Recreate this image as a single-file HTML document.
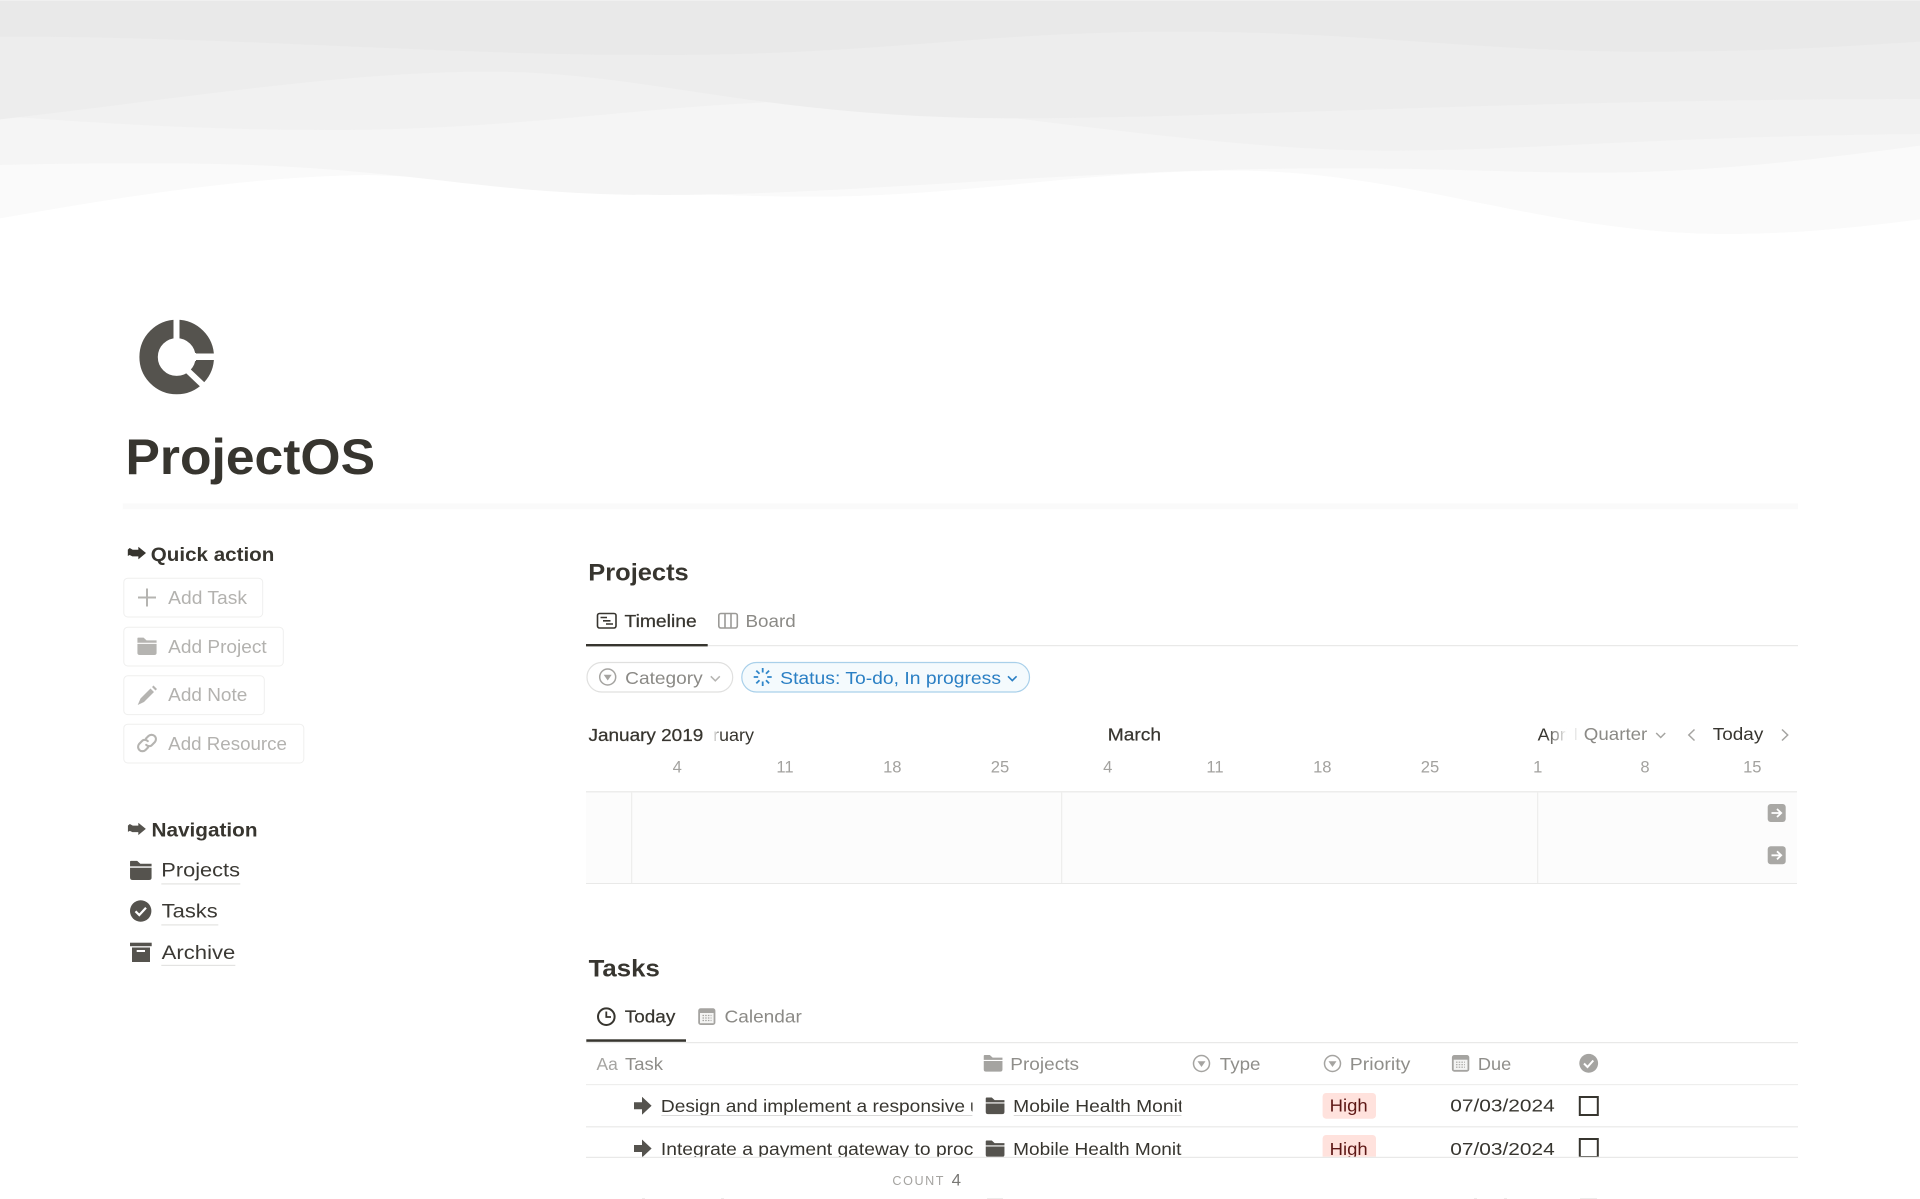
<!DOCTYPE html>
<html lang="en"><head><meta charset="utf-8"><title>ProjectOS</title>
<style>
html,body{margin:0;padding:0;background:#fff;width:1920px;height:1199px;overflow:hidden}
svg{display:block}
text{font-family:"Liberation Sans",Arial,sans-serif;fill:#37352f;white-space:pre}
.h{font-weight:700;font-size:19.8px}
.btn{font-size:18.3px;fill:#b3b2af}
.nav{font-size:19.8px;fill:#3b3934}
.sec{font-weight:700;font-size:24.3px}
.tab{font-size:17.8px;stroke:#37352f;stroke-width:.25px}
.tabg{font-size:17.8px;fill:#8b8a86}
.mon{font-size:17.8px;stroke:#37352f;stroke-width:.25px}
.day{font-size:16.6px;fill:#a3a29f}
.th{font-size:17.6px;fill:#8f8e8a}
.td{font-size:17.8px}
.ic{fill:#55534e}
.icg{fill:#b5b4b1}
.ich{fill:#a5a4a1}
</style></head><body>
<svg xmlns="http://www.w3.org/2000/svg" width="1920" height="1199" viewBox="0 0 1920 1199">
<defs>
<linearGradient id="f1" gradientUnits="userSpaceOnUse" x1="713" x2="722" y1="0" y2="0"><stop offset="0" stop-color="#fff"/><stop offset="1" stop-color="#37352f"/></linearGradient>
<linearGradient id="f2" gradientUnits="userSpaceOnUse" x1="1546" x2="1567" y1="0" y2="0"><stop offset="0" stop-color="#37352f"/><stop offset="1" stop-color="#fff"/></linearGradient>
<clipPath id="cFeb"><rect x="708" y="720" width="60" height="30"/></clipPath>
<clipPath id="cApr"><rect x="1530" y="720" width="38" height="30"/></clipPath>
<clipPath id="cT"><rect x="586" y="1090" width="386.500" height="66.700"/></clipPath>
<clipPath id="cP"><rect x="1010" y="1090" width="171.500" height="66.700"/></clipPath>
<clipPath id="cRow"><rect x="586" y="1086" width="1212" height="70.700"/></clipPath>
<symbol id="turn" viewBox="0 0 55 38"><path d="M0 9L6 4L15 9H32V0L55 19L32 38V29H14L6 25L0 28Z"/></symbol>
<symbol id="folder" viewBox="0 0 65 58"><path d="M0 3Q0 0 3 0H21L31 9H65V17H0Z"/><path d="M0 21H65V50Q65 58 57 58H8Q0 58 0 50Z"/></symbol>
<symbol id="ra" viewBox="0 0 17.600 18"><path d="M0 5.500H8V0L17.600 9L8 18V12.500H0Z"/></symbol>
</defs>

<!-- cover -->
<svg x="0" y="0" width="1920" height="280" viewBox="0 0 1568 840" preserveAspectRatio="none">
<path fill="#fafafa" d="M0 655C100 590 200 530 300 525C430 540 540 590 660 590C790 590 880 512 1010 512C1150 512 1260 702 1410 702C1470 702 1520 680 1568 658L1568 0L0 0Z"/>
<path fill="#f5f5f5" d="M0 495C50 490 100 490 130 490C330 490 380 585 540 585C700 585 880 505 1090 505C1190 505 1230 518 1300 518C1390 518 1470 485 1568 437L1568 0L0 0Z"/>
<path fill="#f1f1f1" d="M0 348C100 375 180 390 270 390C420 390 520 320 640 305C700 295 780 330 830 355C950 410 1050 452 1130 452C1250 452 1350 410 1568 402L1568 0L0 0Z"/>
<path fill="#ededed" d="M0 358C150 295 280 215 400 215C530 215 620 355 830 355C1000 355 1250 297 1568 297L1568 0L0 0Z"/>
<path fill="#e9e9e9" d="M0 110C200 110 350 165 540 165C720 165 800 95 960 95C1120 95 1200 155 1350 155C1450 155 1510 138 1568 125L1568 0L0 0Z"/>
</svg>
<rect x="0" y="0" width="1920" height="1" fill="#f0f0f0"/>

<!-- page icon -->
<circle cx="176.700" cy="357" r="28.100" fill="none" stroke="#55534e" stroke-width="18.400"/>
<rect x="173.500" y="316" width="6" height="24" fill="#fff"/>
<rect x="192" y="353.500" width="26" height="6.500" fill="#fff"/>
<rect x="190" y="353" width="6" height="8" fill="#fff"/>
<path d="M186 369L206 388" stroke="#fff" stroke-width="6" fill="none"/>

<text x="125.500" y="474" font-size="49.800" font-weight="700" textLength="249.500" lengthAdjust="spacingAndGlyphs">ProjectOS</text>
<rect x="122.700" y="503.300" width="1675.300" height="6" fill="#fafafa"/>

<!-- quick action -->
<use href="#turn" x="127.700" y="546.700" width="18.300" height="12.700" fill="#37352f"/>
<text class="h" x="150.800" y="561" textLength="123.500" lengthAdjust="spacingAndGlyphs">Quick action</text>

<rect x="123.800" y="578.200" width="138.900" height="38.800" rx="4" fill="#fff" stroke="#efefee"/>
<rect x="123.800" y="627.200" width="159.500" height="38.800" rx="4" fill="#fff" stroke="#efefee"/>
<rect x="123.800" y="675.800" width="140.500" height="38.800" rx="4" fill="#fff" stroke="#efefee"/>
<rect x="123.800" y="724.200" width="180" height="38.800" rx="4" fill="#fff" stroke="#efefee"/>

<path d="M147 588.500V606.500M138 597.500H156" stroke="#b5b4b1" stroke-width="2" fill="none"/>
<use href="#folder" x="137.300" y="637.300" width="19.400" height="18" class="icg"/>
<path d="M137.700 705L140.500 698.500L150.500 688.500L154 692L144 702ZM152 687L153.500 685.500L157 689L155.500 690.500Z" class="icg"/>
<g fill="none" stroke="#b5b4b1" stroke-width="2.100" stroke-linecap="round">
<path d="M146 738.500L148.700 735.800A4.400 4.400 0 0 1 154.900 742L151.200 745.700A4.400 4.400 0 0 1 146.200 744.900"/>
<path d="M148 747.500L145.300 750.200A4.400 4.400 0 0 1 139.100 744L142.800 740.300A4.400 4.400 0 0 1 147.800 741.100"/>
</g>

<text class="btn" x="168.200" y="604" textLength="78.800" lengthAdjust="spacingAndGlyphs">Add Task</text>
<text class="btn" x="168.200" y="653" textLength="98.500" lengthAdjust="spacingAndGlyphs">Add Project</text>
<text class="btn" x="168.200" y="701" textLength="79.100" lengthAdjust="spacingAndGlyphs">Add Note</text>
<text class="btn" x="168.200" y="750" textLength="118.800" lengthAdjust="spacingAndGlyphs">Add Resource</text>

<!-- navigation -->
<use href="#turn" x="127.700" y="822.700" width="18.300" height="12.400" fill="#55534e"/>
<text class="h" x="151.500" y="836.700" textLength="106" lengthAdjust="spacingAndGlyphs">Navigation</text>

<use href="#folder" x="130" y="860.700" width="21.700" height="19.300" class="ic"/>
<circle cx="140.700" cy="911" r="10.700" class="ic"/>
<path d="M135.500 911.300L139.300 915L146 907.800" stroke="#fff" stroke-width="2.200" fill="none"/>
<rect x="130" y="942.700" width="21.700" height="3.500" class="ic"/>
<path d="M132 947.500H150V962H132ZM136.700 950V952H145V950Z" class="ic" fill-rule="evenodd"/>

<text class="nav" x="161.300" y="876.700" textLength="78.700" lengthAdjust="spacingAndGlyphs">Projects</text>
<rect x="161.300" y="883.300" width="79" height="1.200" fill="#e3e3e2"/>
<text class="nav" x="161.700" y="917.700" textLength="56" lengthAdjust="spacingAndGlyphs">Tasks</text>
<rect x="161.300" y="924.300" width="57" height="1.200" fill="#e3e3e2"/>
<text class="nav" x="161.700" y="959" textLength="73.600" lengthAdjust="spacingAndGlyphs">Archive</text>
<rect x="161.300" y="964.800" width="74" height="1.200" fill="#e3e3e2"/>

<!-- Projects section -->
<text class="sec" x="588.300" y="580.700" textLength="100.400" lengthAdjust="spacingAndGlyphs">Projects</text>

<g fill="none" stroke="#37352f" stroke-width="1.600">
<rect x="597.500" y="613.500" width="18.500" height="14.500" rx="2"/>
<path d="M600.500 617.500H607M603 620.800H610.500M606 624H613"/>
</g>
<text class="tab" x="624.500" y="627" textLength="72.200" lengthAdjust="spacingAndGlyphs">Timeline</text>
<g fill="none" stroke="#9b9a97" stroke-width="1.600">
<rect x="718.800" y="613.500" width="18.500" height="14.500" rx="2"/>
<path d="M725 613.500V628M731 613.500V628"/>
</g>
<text class="tabg" x="745.500" y="627" textLength="50.200" lengthAdjust="spacingAndGlyphs">Board</text>
<rect x="586" y="645" width="1212" height="1.200" fill="#e9e9e8"/>
<rect x="586" y="644" width="121.700" height="2.400" fill="#37352f"/>

<!-- filters -->
<rect x="587" y="662.500" width="145.700" height="29.500" rx="14.700" fill="#fff" stroke="#e0e0df" stroke-width="1.200"/>
<circle cx="607.700" cy="677" r="8" fill="none" stroke="#a5a4a1" stroke-width="1.500"/>
<path d="M603.700 674.800H611.700L607.700 680.500Z" fill="#a5a4a1"/>
<text class="tabg" x="625.200" y="683.800" textLength="77.500" lengthAdjust="spacingAndGlyphs">Category</text>
<path d="M710.800 676.300L715.300 680.800L719.800 676.300" fill="none" stroke="#b5b4b1" stroke-width="1.500"/>

<rect x="741.800" y="662.500" width="287.700" height="29.500" rx="14.700" fill="#f4fafd" stroke="#a9d0ea" stroke-width="1.200"/>
<g stroke="#2f86c9" stroke-width="1.800" fill="none">
<path d="M762.700 668V672.500M762.700 681.500V686M753.700 677H758.200M767.200 677H771.700M756.300 670.600L759.500 673.800M766 680.200L769.100 683.400M769.100 670.600L766 673.800M759.500 680.200L756.300 683.400"/>
</g>
<text x="780.200" y="683.800" font-size="17.800" style="fill:#2a7fc4" textLength="220.800" lengthAdjust="spacingAndGlyphs">Status: To-do, In progress</text>
<path d="M1008 676.300L1012.300 680.600L1016.600 676.300" fill="none" stroke="#2a7fc4" stroke-width="1.600"/>

<!-- timeline header -->
<text class="mon" x="588.500" y="741" textLength="114.800" lengthAdjust="spacingAndGlyphs">January 2019</text>
<text x="682" y="741" font-size="17.800" textLength="72" lengthAdjust="spacingAndGlyphs" clip-path="url(#cFeb)" style="fill:url(#f1)">February</text>
<text class="mon" x="1107.800" y="740.500" textLength="53.200" lengthAdjust="spacingAndGlyphs">March</text>
<text x="1537.700" y="740.500" font-size="17.800" textLength="36" lengthAdjust="spacingAndGlyphs" clip-path="url(#cApr)" style="fill:url(#f2)">April</text>
<rect x="1575.200" y="728" width="1.200" height="12" fill="#e3e3e2"/>
<text class="tabg" x="1583.800" y="740" textLength="63.500" lengthAdjust="spacingAndGlyphs">Quarter</text>
<path d="M1656.200 733L1660.700 737.500L1665.200 733" fill="none" stroke="#a5a4a1" stroke-width="1.500"/>
<path d="M1694.500 729.500L1688.800 735L1694.500 740.500" fill="none" stroke="#a5a4a1" stroke-width="1.500"/>
<text x="1712.800" y="740" font-size="17.800" textLength="50.500" lengthAdjust="spacingAndGlyphs">Today</text>
<path d="M1782 729.500L1787.700 735L1782 740.500" fill="none" stroke="#a5a4a1" stroke-width="1.500"/>

<g text-anchor="middle">
<text class="day" x="677.300" y="772.700">4</text>
<text class="day" x="785" y="772.700">11</text>
<text class="day" x="892.300" y="772.700">18</text>
<text class="day" x="1000" y="772.700">25</text>
<text class="day" x="1107.700" y="772.700">4</text>
<text class="day" x="1215" y="772.700">11</text>
<text class="day" x="1322.300" y="772.700">18</text>
<text class="day" x="1430" y="772.700">25</text>
<text class="day" x="1537.700" y="772.700">1</text>
<text class="day" x="1645" y="772.700">8</text>
<text class="day" x="1752.300" y="772.700">15</text>
</g>

<!-- timeline body -->
<rect x="586" y="792" width="1211" height="91" fill="#fcfcfc"/>
<rect x="586" y="791" width="1211" height="1.500" fill="#ededec"/>
<rect x="586" y="883" width="1211" height="1" fill="#e9e9e8"/>
<rect x="631" y="792" width="1.300" height="91" fill="#eeeeed"/>
<rect x="1061" y="792" width="1.300" height="91" fill="#eeeeed"/>
<rect x="1537" y="792" width="1.300" height="91" fill="#eeeeed"/>

<rect x="1767.700" y="804" width="18" height="18" rx="3" fill="#a9a8a5"/>
<path d="M1771.500 813H1781M1777 809L1781.200 813L1777 817" fill="none" stroke="#fff" stroke-width="1.800"/>
<rect x="1767.700" y="846.300" width="18" height="18" rx="3" fill="#a9a8a5"/>
<path d="M1771.500 855.300H1781M1777 851.300L1781.200 855.300L1777 859.300" fill="none" stroke="#fff" stroke-width="1.800"/>

<!-- Tasks section -->
<text class="sec" x="588.600" y="976.700" textLength="71.200" lengthAdjust="spacingAndGlyphs">Tasks</text>

<circle cx="606.300" cy="1016.700" r="8.300" fill="none" stroke="#37352f" stroke-width="2"/>
<path d="M606.300 1011.500V1017H611" fill="none" stroke="#37352f" stroke-width="1.800"/>
<text class="tab" x="624.800" y="1022.700" textLength="50.500" lengthAdjust="spacingAndGlyphs">Today</text>
<rect x="698.200" y="1008.300" width="17.200" height="16.700" rx="2.500" class="ich"/>
<rect x="700" y="1013" width="13.600" height="10.200" fill="#f4f4f3"/>
<path d="M702.500 1015.500H711.500M702.500 1018H711.500M702.500 1020.500H711.500" stroke="#a5a4a1" stroke-width="1.200" stroke-dasharray="1.500 1.200"/>
<text class="tabg" x="724.500" y="1022.700" textLength="77.300" lengthAdjust="spacingAndGlyphs">Calendar</text>
<rect x="586" y="1042" width="1212" height="1.200" fill="#e9e9e8"/>
<rect x="586.300" y="1039.300" width="99.700" height="2.500" fill="#37352f"/>

<!-- table header -->
<text class="th" x="596.500" y="1070" textLength="21.300" lengthAdjust="spacingAndGlyphs" style="fill:#a5a4a1">Aa</text>
<text class="th" x="625" y="1070" textLength="38" lengthAdjust="spacingAndGlyphs">Task</text>
<use href="#folder" x="983.500" y="1055" width="19.200" height="16.700" class="ich"/>
<text class="th" x="1010.300" y="1070" textLength="68.700" lengthAdjust="spacingAndGlyphs">Projects</text>
<circle cx="1201.500" cy="1063.500" r="8" fill="none" stroke="#a5a4a1" stroke-width="1.500"/>
<path d="M1197.500 1061.300H1205.500L1201.500 1067Z" class="ich"/>
<text class="th" x="1219.800" y="1070" textLength="40.700" lengthAdjust="spacingAndGlyphs">Type</text>
<circle cx="1332.500" cy="1063.500" r="8" fill="none" stroke="#a5a4a1" stroke-width="1.500"/>
<path d="M1328.500 1061.300H1336.500L1332.500 1067Z" class="ich"/>
<text class="th" x="1349.800" y="1070" textLength="60.600" lengthAdjust="spacingAndGlyphs">Priority</text>
<rect x="1451.900" y="1055" width="17.400" height="16.700" rx="2.500" class="ich"/>
<rect x="1453.700" y="1059.700" width="13.800" height="10.200" fill="#f4f4f3"/>
<path d="M1456 1062.200H1465M1456 1064.700H1465M1456 1067.200H1465" stroke="#a5a4a1" stroke-width="1.200" stroke-dasharray="1.500 1.200"/>
<text class="th" x="1477.900" y="1070" textLength="33.300" lengthAdjust="spacingAndGlyphs">Due</text>
<circle cx="1588.700" cy="1063.300" r="9.400" class="ich"/>
<path d="M1584 1063.500L1587.500 1067L1593.300 1060.500" fill="none" stroke="#fff" stroke-width="2"/>
<rect x="586" y="1084" width="1212" height="1.200" fill="#eeeeed"/>

<!-- rows -->
<use href="#ra" x="634" y="1096.700" width="17.600" height="18" class="ic"/>
<g clip-path="url(#cT)">
<text class="td" x="660.900" y="1112.200" textLength="304.100" lengthAdjust="spacingAndGlyphs">Design and implement a responsive</text>
<text class="td" x="970" y="1112.200">user interface</text>
</g>
<rect x="661.400" y="1115" width="311" height="1" fill="#d9d9d8"/>
<use href="#folder" x="985.500" y="1097.500" width="19.200" height="16.700" class="ic"/>
<g clip-path="url(#cP)"><text class="td" x="1013.200" y="1112.200" textLength="170" lengthAdjust="spacingAndGlyphs">Mobile Health Monit</text></g>
<rect x="1013.700" y="1115" width="167.700" height="1" fill="#d9d9d8"/>
<rect x="1322.600" y="1093" width="53.400" height="25.700" rx="3.500" fill="#ffe2dd"/>
<text x="1329.700" y="1111.700" font-size="17.800" style="fill:#5d1715" textLength="38" lengthAdjust="spacingAndGlyphs">High</text>
<text class="td" x="1450.300" y="1111.700" textLength="104.400" lengthAdjust="spacingAndGlyphs">07/03/2024</text>
<rect x="1579.800" y="1097" width="18" height="18" fill="#fff" stroke="#37352f" stroke-width="2"/>
<rect x="586" y="1126" width="1212" height="1.500" fill="#eeeeed"/>

<g clip-path="url(#cRow)">
<use href="#ra" x="634" y="1139.500" width="17.600" height="18" class="ic"/>
<text class="td" x="660.900" y="1155" textLength="312.500" lengthAdjust="spacingAndGlyphs">Integrate a payment gateway to proc</text>
<use href="#folder" x="985.500" y="1140.500" width="19.200" height="16.700" class="ic"/>
<text class="td" x="1013.200" y="1155" textLength="168.200" lengthAdjust="spacingAndGlyphs">Mobile Health Monit</text>
<rect x="1322.600" y="1135" width="53.400" height="25.700" rx="3.500" fill="#ffe2dd"/>
<text x="1329.700" y="1155" font-size="17.800" style="fill:#5d1715" textLength="38" lengthAdjust="spacingAndGlyphs">High</text>
<text class="td" x="1450.300" y="1155" textLength="104.400" lengthAdjust="spacingAndGlyphs">07/03/2024</text>
<rect x="1579.800" y="1139" width="18" height="18" fill="#fff" stroke="#37352f" stroke-width="2"/>
</g>
<rect x="586" y="1156.800" width="1212" height="1.200" fill="#e9e9e8"/>

<text x="892.400" y="1185" font-size="12.600" style="fill:#a5a4a1" textLength="51.100" lengthAdjust="spacing">COUNT</text>
<text x="951.600" y="1185.500" font-size="16.800" style="fill:#787774" textLength="9.400" lengthAdjust="spacingAndGlyphs">4</text>

<!-- peek of next rows -->
<g fill="#ededec">
<rect x="642" y="1198" width="3" height="1"/><rect x="721" y="1198" width="3" height="1"/>
<rect x="987" y="1198" width="16" height="1"/>
<rect x="1474" y="1198" width="3" height="1"/><rect x="1504" y="1198" width="3" height="1"/>
<rect x="1580" y="1198" width="17" height="1"/>
</g>
</svg>
</body></html>
